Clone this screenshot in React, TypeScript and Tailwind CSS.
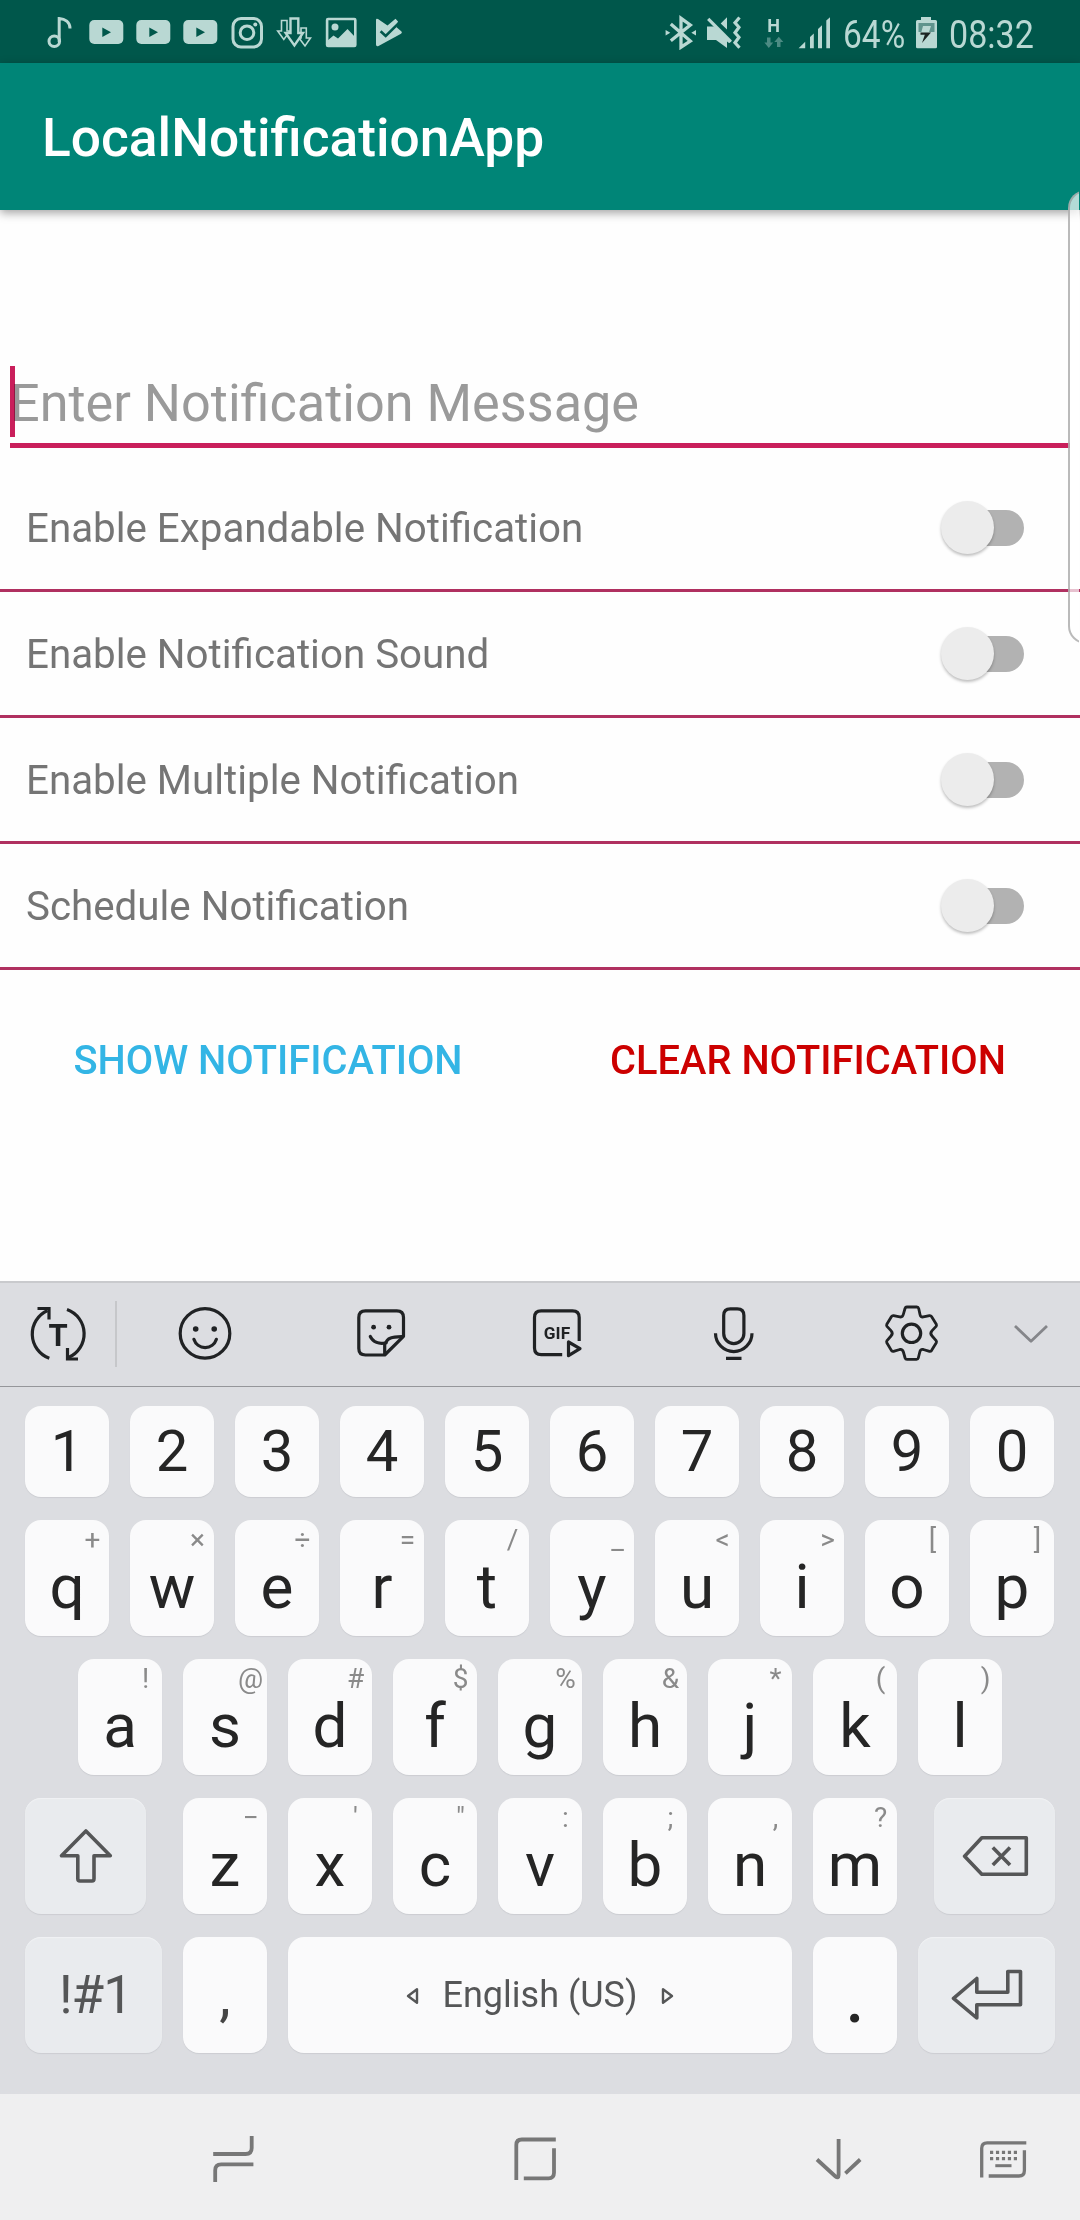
import React, { useState } from "react";
import clsx from "clsx";

const options = [
  "Enable Expandable Notification",
  "Enable Notification Sound",
  "Enable Multiple Notification",
  "Schedule Notification",
];

const digits = ["1", "2", "3", "4", "5", "6", "7", "8", "9", "0"];

const topRow = [
  { label: "q", hint: "+" },
  { label: "w", hint: "×" },
  { label: "e", hint: "÷" },
  { label: "r", hint: "=" },
  { label: "t", hint: "/" },
  { label: "y", hint: "_" },
  { label: "u", hint: "<" },
  { label: "i", hint: ">" },
  { label: "o", hint: "[" },
  { label: "p", hint: "]" },
];

const homeRow = [
  { label: "a", hint: "!" },
  { label: "s", hint: "@" },
  { label: "d", hint: "#" },
  { label: "f", hint: "$" },
  { label: "g", hint: "%" },
  { label: "h", hint: "&" },
  { label: "j", hint: "*" },
  { label: "k", hint: "(" },
  { label: "l", hint: ")" },
];

const bottomRow = [
  { label: "z", hint: "−" },
  { label: "x", hint: "'" },
  { label: "c", hint: '"' },
  { label: "v", hint: ":" },
  { label: "b", hint: ";" },
  { label: "n", hint: "," },
  { label: "m", hint: "?" },
];

export default function App() {
  return (
    <div className="relative flex h-[2220px] w-[1080px] flex-col overflow-hidden bg-[#fefefe] font-['Roboto',sans-serif]">
      <StatusBar />
      <header className="relative z-10 flex h-[147px] items-center bg-[#008577] pl-[42px] pt-[5px] shadow-[0_3px_9px_rgba(0,0,0,0.36)]">
        <h1 className="text-[53.3px] font-medium leading-none text-white">
          LocalNotificationApp
        </h1>
      </header>
      <main className="flex flex-1 flex-col">
        <MessageField />
        {options.map((option) => (
          <OptionRow key={option} label={option} />
        ))}
        <div className="flex pt-[64px] text-[39.8px] font-medium leading-[54px]">
          <button className="w-[536px] text-center text-[#33b5e5]">
            SHOW NOTIFICATION
          </button>
          <button className="flex-1 text-center text-[#cc0000]">
            CLEAR NOTIFICATION
          </button>
        </div>
      </main>
      <Keyboard />
      <NavigationBar />
      {/* edge panel handle */}
      <div className="absolute left-[1068px] top-[190px] z-20 h-[454px] w-[11px] overflow-hidden">
        <div className="h-full w-[40px] rounded-[18px] border-2 border-[#8c8c8c]/60 bg-white/70" />
      </div>
    </div>
  );
}

function MessageField() {
  return (
    <div className="mx-[10px] mt-[156px] h-[82px] border-b-[5px] border-[#c91f5b]">
      <div className="relative h-[71px] border-l-[5px] border-[#c91f5b]">
        <span className="relative -left-[5px] block text-[52.2px] leading-[76px] text-[#9b9b9b] mix-blend-multiply">
          Enter Notification Message
        </span>
      </div>
    </div>
  );
}

function OptionRow({ label }: { label: string }) {
  const [enabled, setEnabled] = useState(false);
  return (
    <div
      className={clsx(
        "flex h-[126px] items-center justify-between border-b-[3px] border-[#b03060] pl-[26px] pr-[56px]",
        label === options[0] && "mt-[18px]"
      )}
    >
      <span className="pt-[4px] text-[40.3px] leading-none text-[#757575]">{label}</span>
      <button
        onClick={() => setEnabled(!enabled)}
        className={clsx(
          "flex h-[36px] w-[77px] items-center rounded-full bg-[#b2b2b2]",
          enabled && "justify-end"
        )}
      >
        <span className="-ml-[6px] h-[53px] w-[53px] shrink-0 rounded-full bg-[#ececec] shadow-[0_2px_3px_rgba(0,0,0,0.25)]" />
      </button>
    </div>
  );
}

function StatusBar() {
  return (
    <div className="flex h-[63px] items-center bg-[#00574b] pl-[41px] pt-px text-[#b9d8d3]">
      <div className="flex gap-[11px]">
        <StatusIcon>
          <circle cx="13.3" cy="27.3" r="5.3" fill="none" stroke="currentColor" strokeWidth="3" />
          <path d="M18.2 28V4.6C24 5 29 8 29 14.5" fill="none" stroke="currentColor" strokeWidth="3" />
        </StatusIcon>
        <YoutubeIcon />
        <YoutubeIcon />
        <YoutubeIcon />
        <StatusIcon>
          <g fill="none" stroke="currentColor" strokeWidth="3">
            <rect x="4" y="4.5" width="28.5" height="28.5" rx="8" />
            <circle cx="18" cy="18.7" r="6.8" />
          </g>
          <circle cx="26.3" cy="10.5" r="2" fill="currentColor" />
        </StatusIcon>
        <StatusIcon>
          <g fill="#00574b" stroke="currentColor" strokeWidth="1.6">
            <path d="M5.5 6.5H11V17h3L7.8 25.5L1.7 17H5.5Z" />
            <path d="M25 14H30.3V24H34.5L29 32L23 24H25Z" />
            <path d="M14.5 4.5H22.3V19H27L18.4 31.5L9.6 19H14.5Z" strokeWidth="2.4" />
          </g>
        </StatusIcon>
        <StatusIcon>
          <rect x="4.1" y="5" width="28.2" height="27" rx="1" fill="none" stroke="currentColor" strokeWidth="2.6" />
          <circle cx="12" cy="13" r="3.5" fill="currentColor" />
          <path d="M4 27L10.5 21.5L15 24.5L24.5 15L32.5 23.5V32H4Z" fill="currentColor" />
        </StatusIcon>
        <StatusIcon>
          <path d="M6 6Q6 4 8 5L17.5 11.5L25.5 4.8L28 7.4L26.5 13.3L31.5 17.5Q32.5 18.8 31 19.8L8.5 32Q6 32.8 6 30.5Z" fill="currentColor" />
          <path d="M10.6 17.3L15.7 22L29 8.8" fill="none" stroke="#00574b" strokeWidth="2.6" />
        </StatusIcon>
      </div>
      <div className="ml-[257px] flex items-center">
        <StatusIcon>
          <path d="M7.8 10L27.3 27L18 33.2V4.3L27.3 11L7.8 26.7" fill="none" stroke="currentColor" strokeWidth="3.3" />
          <path d="M2.6 16L7.3 18.7L2.6 21.4ZM33 16L28.3 18.7L33 21.4Z" fill="currentColor" />
        </StatusIcon>
        <StatusIcon className="ml-[6px]">
          <path d="M2 12.5H9L26.5 27.5L24 29L22 27.5V34L11 26H2ZM22 3.3V15.5L15.7 9.5Z" fill="currentColor" />
          <path d="M3.2 4.8L25.8 27.7" stroke="currentColor" strokeWidth="3.2" />
          <path d="M34.5 3.5L30 8.7L34 13.3L30 18.7L34 23.3L30 28.7L34.5 33.7" fill="none" stroke="currentColor" strokeWidth="3.2" />
        </StatusIcon>
        <svg className="ml-[23px] h-[36px] w-[20px]" viewBox="0 0 20 36">
          <text x="9.7" y="18.4" textAnchor="middle" fontSize="18" fontWeight="700" fill="currentColor">
            H
          </text>
          <path d="M3 23.5H6.5V28.5H9.2L4.8 34L.4 28.5H3ZM13 33H16.5V28H19.3L14.8 22.8L10.3 28H13Z" fill="#4c8b83" />
        </svg>
        <svg className="ml-[14px] h-[36px] w-[34px]" viewBox="0 0 34 36">
          <path d="M.6 34.3L7.2 27.7V34.3ZM12 34.3V23L15.8 19.5V34.3ZM20 34.3V15L24 11.3V34.3ZM28.3 34.3V6.5L32 3.3V34.3Z" fill="currentColor" />
        </svg>
        <span className="ml-[11px] w-[61px] origin-left scale-x-[0.85] whitespace-nowrap pt-[5px] text-[39.4px] leading-none">
          64%
        </span>
        <svg className="ml-[11px] h-[36px] w-[22px]" viewBox="0 0 22 36">
          <path d="M6 3H16V6H20.5Q22 6 22 7.5V33Q22 34.3 20.5 34.3H2.5Q1 34.3 1 33V7.5Q1 6 2.5 6H6Z" fill="currentColor" />
          <path d="M3.5 9H19.5V18H3.5Z" fill="#5f948d" />
          <path d="M8 12H16L14 18H17L8.5 29L9.5 21H5.5Z" fill="currentColor" />
          <path d="M5.5 18.5H16L7 29L9.8 20.8H5.5Z" fill="#1d2523" />
        </svg>
        <span className="ml-[12px] w-[84px] origin-left scale-x-[0.865] whitespace-nowrap pt-[5px] text-[39.4px] leading-none">
          08:32
        </span>
      </div>
    </div>
  );
}

function StatusIcon({
  children,
  className,
}: {
  children: React.ReactNode;
  className?: string;
}) {
  return (
    <svg className={clsx("h-[36px] w-[36px]", className)} viewBox="0 0 36 36">
      {children}
    </svg>
  );
}

function YoutubeIcon() {
  return (
    <StatusIcon>
      <rect x="1.3" y="6" width="34" height="24" rx="5" fill="currentColor" />
      <path d="M14.3 13.5V23L23 18.2Z" fill="#00574b" />
    </StatusIcon>
  );
}

function Keyboard() {
  return (
    <section className="h-[813px] border-t-2 border-[#c9cacd] bg-[#dcdde1]">
      <Toolbar />
      <div className="px-[25px] pt-[19px]">
        <div className="flex gap-[21px]">
          {digits.map((digit) => (
            <div
              key={digit}
              className="h-[91px] w-[84px] rounded-[16px] bg-[#fafafb] text-center text-[58px] leading-[91px] text-[#252525] shadow-[0_1px_1px_#cccdd2]"
            >
              {digit}
            </div>
          ))}
        </div>
        <div className="mt-[23px] flex gap-[21px]">
          {topRow.map((key) => (
            <LetterKey key={key.label} {...key} />
          ))}
        </div>
        <div className="mt-[23px] flex gap-[21px] pl-[53px]">
          {homeRow.map((key) => (
            <LetterKey key={key.label} {...key} />
          ))}
        </div>
        <div className="mt-[23px] flex justify-between">
          <FunctionKey className="w-[121px]">
            <svg className="h-[64px] w-[64px]" viewBox="0 0 64 64">
              <path
                d="M31.9 7L7.5 31.8H23.8V54.5Q23.8 57 26 57H38Q40 57 40 54.5V31.8H56.3Z"
                fill="none"
                stroke="#555657"
                strokeWidth="3.6"
                strokeLinejoin="round"
              />
            </svg>
          </FunctionKey>
          <div className="flex gap-[21px]">
            {bottomRow.map((key) => (
              <LetterKey key={key.label} {...key} />
            ))}
          </div>
          <FunctionKey className="w-[121px]">
            <svg className="h-[64px] w-[80px]" viewBox="0 0 80 64">
              <g fill="none" stroke="#555657" strokeWidth="3.6" strokeLinejoin="round">
                <path d="M9.6 32.3L26.8 13.7H71.3V50.3H26.8Z" />
                <path d="M37.8 23.5L55 41M55 23.5L37.8 41" />
              </g>
            </svg>
          </FunctionKey>
        </div>
        <div className="mt-[23px] flex gap-[21px]">
          <FunctionKey className="w-[137px]">
            <span className="pl-[4px] pt-px text-[53px] leading-none tracking-[-1px] text-[#555657]">
              !#1
            </span>
          </FunctionKey>
          <div className="h-[116px] w-[84px] rounded-[16px] bg-[#fafafb] pt-[22px] text-center text-[58px] leading-[72px] text-[#454545] shadow-[0_1px_1px_#cccdd2]">
            ,
          </div>
          <div className="flex h-[116px] w-[504px] items-center justify-center gap-[24px] rounded-[16px] bg-[#fafafb] text-[36px] leading-none text-[#555657] shadow-[0_1px_1px_#cccdd2]">
            <svg className="mt-px h-[18px] w-[13px]" viewBox="0 0 13 18">
              <path d="M11 2.2V15.8L2 9Z" fill="none" stroke="currentColor" strokeWidth="2.4" strokeLinejoin="round" />
            </svg>
            <span>English (US)</span>
            <svg className="mt-px h-[18px] w-[13px]" viewBox="0 0 13 18">
              <path d="M2 2.2V15.8L11 9Z" fill="none" stroke="currentColor" strokeWidth="2.4" strokeLinejoin="round" />
            </svg>
          </div>
          <div className="h-[116px] w-[84px] rounded-[16px] bg-[#fafafb] pt-[25px] text-center text-[66px] font-medium leading-[76px] text-[#252525] shadow-[0_1px_1px_#cccdd2]">
            .
          </div>
          <FunctionKey className="w-[137px]">
            <svg className="h-[64px] w-[80px]" viewBox="0 0 80 64">
              <path
                d="M6.5 35.3L29.8 15.5V29.3H60.8V8.5H73.5V41.7H29.8V55Z"
                fill="none"
                stroke="#555657"
                strokeWidth="3.6"
                strokeLinejoin="round"
              />
            </svg>
          </FunctionKey>
        </div>
      </div>
    </section>
  );
}

function LetterKey({ label, hint }: { label: string; hint: string }) {
  return (
    <div className="relative h-[116px] w-[84px] rounded-[16px] bg-[#fafafb] text-center text-[#252525] shadow-[0_1px_1px_#cccdd2]">
      <span className="absolute right-0 top-[3px] w-[33px] text-center text-[28px] leading-[33px] text-[#8a8a8a]">
        {hint}
      </span>
      <span className="block pt-[31px] text-[62px] leading-[72px]">{label}</span>
    </div>
  );
}

function FunctionKey({
  children,
  className,
}: {
  children: React.ReactNode;
  className: string;
}) {
  return (
    <div
      className={clsx(
        "flex h-[116px] shrink-0 items-center justify-center rounded-[16px] bg-[#e9ebee] shadow-[0_1px_1px_#cccdd2,inset_0_1px_1px_#f1f2f4]",
        className
      )}
    >
      {children}
    </div>
  );
}

function Toolbar() {
  return (
    <div className="flex h-[104px] items-center border-b border-[#95969a] pb-[2px] text-[#202224]">
      <div className="flex w-[115px] justify-center pl-px">
        <ToolIcon>
          <path d="M23.3 56.3A25.8 25.8 0 0 1 21.5 8.5M41 7.5A25.8 25.8 0 0 1 42.5 55.5" />
          <path d="M11.5 6.5H23V17.5M41.5 46V57H52" strokeLinejoin="miter" />
          <text x="32" y="43.8" textAnchor="middle" fontSize="31" fontWeight="700" fill="currentColor" stroke="none">
            T
          </text>
        </ToolIcon>
      </div>
      <div className="h-[66px] w-[2px] bg-[#c6c7ca]" />
      <div className="flex w-[880px] justify-around">
        <ToolIcon>
          <circle cx="32" cy="31.4" r="24.8" />
          <path d="M20.9 37.3A11.8 11.8 0 0 0 43.4 37.3" strokeLinecap="round" />
          <circle cx="22.7" cy="27" r="2.8" fill="currentColor" stroke="none" />
          <circle cx="41.2" cy="27" r="2.8" fill="currentColor" stroke="none" />
        </ToolIcon>
        <ToolIcon>
          <path d="M35.7 53H16.5Q9.8 53 9.8 46.5V15.5Q9.8 8.8 16.5 8.8H47.8Q54.5 8.8 54.5 15.5V34.3Z" />
          <path d="M35.7 52.5V41.5M54 34.5C44 35 38 35 36.5 42" />
          <path d="M21.3 34.5C24 40 30 42.5 37 40.7" strokeLinecap="round" />
          <circle cx="24.6" cy="25.2" r="2.4" fill="currentColor" stroke="none" />
          <circle cx="40" cy="25.2" r="2.4" fill="currentColor" stroke="none" />
        </ToolIcon>
        <ToolIcon>
          <path d="M37.2 52.7H16.2Q9.5 52.7 9.5 46V15.5Q9.5 8.8 16.2 8.8H47.5Q54.2 8.8 54.2 15.5V39" />
          <path d="M43.5 40V53.7L55 46.7Z" />
          <text x="32" y="37" textAnchor="middle" fontSize="17.3" fontWeight="700" fill="currentColor" stroke="none">
            GIF
          </text>
        </ToolIcon>
        <ToolIcon>
          <path d="M22.7 13.5Q22.7 6.8 29.4 6.8H36.2Q42.9 6.8 42.9 13.5V31.5A10.1 10.1 0 0 1 22.7 31.5Z" />
          <path d="M14.5 31.3A18 18 0 0 0 51 31.3M25 56.3H40.5" />
        </ToolIcon>
        <ToolIcon className="translate-x-[2.5px]">
          <path d="M27.3 5H37.3Q38.8 5 39.2 6.5L40.5 12.5Q41 15.5 43.8 14.9L50 13.6Q51.3 13.4 52 14.5L56.8 22.3Q57.3 23.4 56.6 24.4L52.6 28.6Q50 31.3 52.6 34L56.6 38.6Q57.3 39.6 56.8 40.7L52 48.6Q51.3 49.6 50 49.4L43.8 47.5Q41 47 40.3 50L38.8 56Q38.5 57.3 37 57.3H27.5Q26 57.3 25.6 56L23.9 50Q23 47 20.3 47.5L14 49.4Q12.8 49.6 12 48.6L7.3 40.7Q6.8 39.6 7.5 38.6L11.5 34Q14 31.3 11.5 28.6L7.5 24.4Q6.8 23.4 7.3 22.3L12 14.5Q12.8 13.4 14 13.6L20.3 14.9Q23 15.5 23.8 12.5L25.5 6.5Q26 5 27.3 5Z" strokeWidth="2.8" />
          <circle cx="32" cy="31.3" r="9.2" />
        </ToolIcon>
      </div>
      <div className="flex flex-1 justify-center pr-[15px] text-[#85868a]">
        <ToolIcon>
          <path d="M16 24L32 39.3L48 24" strokeWidth="2.8" />
        </ToolIcon>
      </div>
    </div>
  );
}

function ToolIcon({
  children,
  className,
}: {
  children: React.ReactNode;
  className?: string;
}) {
  return (
    <svg
      className={clsx("h-[64px] w-[64px]", className)}
      viewBox="0 0 64 64"
      fill="none"
      stroke="currentColor"
      strokeWidth="3.2"
      strokeLinejoin="round"
    >
      {children}
    </svg>
  );
}

function NavigationBar() {
  return (
    <nav className="flex h-[126px] items-center bg-[#efeff0] pl-[201px] text-[#777777]">
      <NavIcon>
        <path d="M12.2 29H44.7Q50.7 29 50.7 23V11M52.4 39.3H20.2Q14.2 39.3 14.2 45.3V57" />
      </NavIcon>
      <NavIcon className="ml-[238px]">
        <path d="M13.3 55V20Q13.3 14.5 18.8 14.5H52.8M51 23.3V47.8Q51 53.3 45.5 53.3H20.8" />
      </NavIcon>
      <NavIcon className="ml-[239px]">
        <path d="M32.6 14V50Q32.6 54 29.5 51.5L11 34.5M39.4 48.3L54.2 34.5" />
      </NavIcon>
      <NavIcon className="ml-[101px]">
        <path d="M10.7 52.5V23.3Q10.7 17.8 16.2 17.8H55.3M53.4 25.3V45.5Q53.4 51 47.9 51H17.7" strokeWidth="3.3" />
        <path d="M19 27.3H46M19 33.7H46" strokeWidth="3.3" strokeDasharray="3.2 2.75" />
        <path d="M24.3 40.7H40.5" strokeWidth="3" />
      </NavIcon>
    </nav>
  );
}

function NavIcon({
  children,
  className,
}: {
  children: React.ReactNode;
  className?: string;
}) {
  return (
    <svg
      className={clsx("h-[64px] w-[64px]", className)}
      viewBox="0 0 64 64"
      fill="none"
      stroke="currentColor"
      strokeWidth="3.8"
    >
      {children}
    </svg>
  );
}
